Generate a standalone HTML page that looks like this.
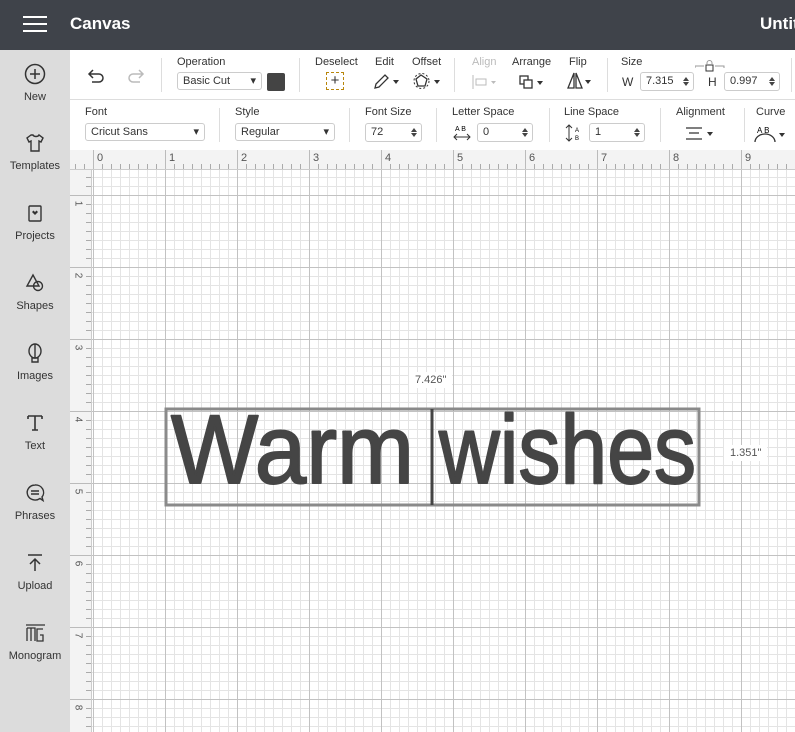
<!DOCTYPE html>
<html><head><meta charset="utf-8"><style>
*{margin:0;padding:0;box-sizing:border-box}
body{width:795px;height:732px;overflow:hidden;position:relative;font-family:"Liberation Sans",sans-serif;color:#333;background:#fff}
.abs{position:absolute}
#hdr{left:0;top:0;width:795px;height:50px;background:#3f434a}
#side{left:0;top:50px;width:70px;height:682px;background:#dcdcdc}
.si{position:absolute;left:0;width:70px;text-align:center;font-size:11px;color:#333}
.si svg{display:block;margin:0 auto 6px}
#tb1{left:70px;top:50px;width:725px;height:50px;background:#fff;border-bottom:1px solid #ddd}
#tb2{left:70px;top:100px;width:725px;height:50px;background:#fff}
.lbl{position:absolute;font-size:11px;color:#333}
.sel{position:absolute;height:18px;border:1px solid #ccc;border-radius:3px;font-size:11px;padding:2px 5px;color:#333;background:#fff}
.sel:after{content:"▾";position:absolute;right:5px;top:1px;font-size:11px}
.spin{position:absolute;height:19px;border:1px solid #ccc;border-radius:3px;font-size:11px;padding:2px 5px;background:#fff}
.spin:after{content:"";position:absolute;right:4px;top:4px;border:3px solid transparent;border-bottom:4px solid #444;border-top:0}
.spin:before{content:"";position:absolute;right:4px;bottom:4px;border:3px solid transparent;border-top:4px solid #444;border-bottom:0}
.vs{position:absolute;width:1px;background:#ddd}
#canvas{left:92px;top:170px;width:703px;height:562px;background-color:#fff;
background-image:linear-gradient(to right,#c2c2c2 1px,transparent 1px),linear-gradient(to bottom,#c2c2c2 1px,transparent 1px),linear-gradient(to right,#e4e4e4 1px,transparent 1px),linear-gradient(to bottom,#e4e4e4 1px,transparent 1px);
background-size:72px 72px,72px 72px,9px 9px,9px 9px;
background-position:1px 25px,1px 25px,1px 7px,1px 7px}
#rh{left:70px;top:150px;width:725px;height:20px;background:#f3f3f3;border-bottom:1px solid #ccc;
background-image:linear-gradient(to right,#bbb 1px,transparent 1px),linear-gradient(to right,#aaa 1px,transparent 1px);
background-size:72px 20px,9px 6px;background-position:23px 0,23px 14px;background-repeat:repeat-x}
#rv{left:70px;top:170px;width:22px;height:562px;background:#f3f3f3;border-right:1px solid #ccc;
background-image:linear-gradient(to bottom,#bbb 1px,transparent 1px),linear-gradient(to bottom,#aaa 1px,transparent 1px);
background-size:22px 72px,6px 9px;background-position:0 25px,16px 7px;background-repeat:repeat-y}
.rn{position:absolute;font-size:11px;color:#555}
.rvn{position:absolute;font-size:10px;color:#555;transform:rotate(90deg)}
</style></head><body>
<div id="hdr" class="abs">
 <div class="abs" style="left:23px;top:16px;width:24px;height:2px;background:#fff;box-shadow:0 7px 0 #fff,0 14px 0 #fff"></div>
 <div class="abs" style="left:70px;top:14px;color:#fff;font-size:17px;font-weight:bold">Canvas</div>
 <div class="abs" style="left:760px;top:14px;color:#fff;font-size:17px;font-weight:bold">Untitled</div>
</div>
<div id="side" class="abs">
 <div class="si" style="top:13px"><svg width="22" height="22" viewBox="0 0 22 22"><circle cx="11" cy="11" r="9.5" fill="none" stroke="#333" stroke-width="1.5"/><path d="M11 6v10M6 11h10" stroke="#333" stroke-width="1.5"/></svg>New</div>
 <div class="si" style="top:82px"><svg width="22" height="22" viewBox="0 0 22 22"><path d="M7 3 3 6l2 4 2-1v10h8V9l2 1 2-4-4-3c-1 2-5 2-6 0z" fill="none" stroke="#333" stroke-width="1.4"/></svg>Templates</div>
 <div class="si" style="top:152px"><svg width="22" height="22" viewBox="0 0 22 22"><rect x="5" y="4" width="12" height="15" rx="1" fill="none" stroke="#333" stroke-width="1.4"/><path d="M11 13l-3-3 1.5-1.5L11 10l1.5-1.5L14 10z" fill="#333"/></svg>Projects</div>
 <div class="si" style="top:222px"><svg width="22" height="22" viewBox="0 0 22 22"><path d="M9 3 3 14h12z" fill="none" stroke="#333" stroke-width="1.4"/><circle cx="14" cy="14" r="4.5" fill="none" stroke="#333" stroke-width="1.4"/></svg>Shapes</div>
 <div class="si" style="top:292px"><svg width="22" height="22" viewBox="0 0 22 22"><ellipse cx="11" cy="9" rx="6" ry="7" fill="none" stroke="#333" stroke-width="1.4"/><path d="M11 2v14M8 16h6v4H8z" fill="none" stroke="#333" stroke-width="1.4"/></svg>Images</div>
 <div class="si" style="top:362px"><svg width="22" height="22" viewBox="0 0 22 22"><path d="M4 4h14M11 4v14M8 18h6M4 4v3M18 4v3" fill="none" stroke="#333" stroke-width="1.6"/></svg>Text</div>
 <div class="si" style="top:432px"><svg width="22" height="22" viewBox="0 0 22 22"><path d="M11 3a8 7.5 0 1 0 5 13.5l3 2-1-3.5A8 7.5 0 0 0 11 3z" fill="none" stroke="#333" stroke-width="1.4"/><path d="M7 9h8M7 12h8" stroke="#333" stroke-width="1.4"/></svg>Phrases</div>
 <div class="si" style="top:502px"><svg width="22" height="22" viewBox="0 0 22 22"><path d="M4 3h14M11 19V7M6 12l5-5 5 5" fill="none" stroke="#333" stroke-width="1.5"/></svg>Upload</div>
 <div class="si" style="top:572px"><svg width="22" height="22" viewBox="0 0 22 22"><path d="M2 3h19M3 6v13M7 6v13M3 6h8v13M19 7h-6v12h6v-6h-3" fill="none" stroke="#333" stroke-width="1.3"/></svg>Monogram</div>
</div>
<div id="tb1" class="abs">
 <svg class="abs" style="left:17px;top:18px" width="20" height="16" viewBox="0 0 20 16"><path d="M6 2 2 6l4 4M2 6h10a4 4 0 0 1 0 8H5" fill="none" stroke="#333" stroke-width="1.5"/></svg>
 <svg class="abs" style="left:55px;top:18px" width="20" height="16" viewBox="0 0 20 16"><path d="M14 2l4 4-4 4M18 6H8a4 4 0 0 0 0 8h7" fill="none" stroke="#bbb" stroke-width="1.5"/></svg>
 <div class="vs" style="left:91px;top:8px;height:34px"></div>
 <div class="lbl" style="left:107px;top:6px">Operation</div>
 <div class="sel" style="left:107px;top:22px;width:85px">Basic Cut</div>
 <div class="abs" style="left:197px;top:23px;width:18px;height:18px;background:#444;border-radius:2px"></div>
 <div class="vs" style="left:229px;top:8px;height:34px"></div>
 <div class="lbl" style="left:245px;top:6px">Deselect</div>
 <div class="abs" style="left:256px;top:22px;width:18px;height:18px;border:1px dashed #b8860b;text-align:center;font-size:15px;line-height:15px">+</div>
 <div class="lbl" style="left:305px;top:6px">Edit</div>
 <svg class="abs" style="left:302px;top:22px" width="28" height="18"><path d="M3 16l1-4L13 3l3 3-9 9z" fill="none" stroke="#333" stroke-width="1.3"/><path d="M21 8h6l-3 4z" fill="#333"/></svg>
 <div class="lbl" style="left:342px;top:6px">Offset</div>
 <svg class="abs" style="left:343px;top:22px" width="28" height="18"><path d="M8 3l6 4-2 7H5L3 7z" fill="none" stroke="#333" stroke-width="1.3"/><circle cx="8.5" cy="9" r="7.5" fill="none" stroke="#333" stroke-dasharray="2 2"/><path d="M21 8h6l-3 4z" fill="#333"/></svg>
 <div class="vs" style="left:384px;top:8px;height:34px"></div>
 <div class="lbl" style="left:402px;top:6px;color:#bbb">Align</div>
 <svg class="abs" style="left:402px;top:24px" width="28" height="16"><path d="M1 1v14M4 5h10v6H4z" fill="none" stroke="#bbb"/><path d="M19 7h5l-2.5 3z" fill="#bbb"/></svg>
 <div class="lbl" style="left:442px;top:6px">Arrange</div>
 <svg class="abs" style="left:449px;top:23px" width="28" height="18"><rect x="1" y="3" width="8" height="8" fill="none" stroke="#333" stroke-width="1.3"/><rect x="5" y="7" width="8" height="8" fill="#fff" stroke="#333" stroke-width="1.3"/><path d="M18 8h6l-3 4z" fill="#333"/></svg>
 <div class="lbl" style="left:499px;top:6px">Flip</div>
 <svg class="abs" style="left:496px;top:22px" width="28" height="18"><path d="M8 1 2 16h6zM10 1l6 15h-6z" fill="none" stroke="#333" stroke-width="1.3"/><path d="M19 8h6l-3 4z" fill="#333"/></svg>
 <div class="vs" style="left:537px;top:8px;height:34px"></div>
 <div class="lbl" style="left:551px;top:6px">Size</div>
 <svg class="abs" style="left:625px;top:10px" width="30" height="14"><rect x="11" y="5" width="7" height="6" fill="none" stroke="#333"/><path d="M12 5V3a2.5 2.5 0 0 1 5 0v2M0 8V6h9M20 6h9v2" fill="none" stroke="#999"/></svg>
 <div class="lbl" style="left:552px;top:25px;font-size:12px">W</div>
 <div class="spin" style="left:570px;top:22px;width:54px">7.315</div>
 <div class="lbl" style="left:638px;top:25px;font-size:12px">H</div>
 <div class="spin" style="left:654px;top:22px;width:56px">0.997</div>
 <div class="vs" style="left:721px;top:8px;height:34px"></div>
</div>
<div id="tb2" class="abs">
 <div class="lbl" style="left:15px;top:6px">Font</div>
 <div class="sel" style="left:15px;top:23px;width:120px">Cricut Sans</div>
 <div class="vs" style="left:149px;top:8px;height:34px"></div>
 <div class="lbl" style="left:165px;top:6px">Style</div>
 <div class="sel" style="left:165px;top:23px;width:100px">Regular</div>
 <div class="vs" style="left:279px;top:8px;height:34px"></div>
 <div class="lbl" style="left:295px;top:6px">Font Size</div>
 <div class="spin" style="left:295px;top:23px;width:57px">72</div>
 <div class="vs" style="left:366px;top:8px;height:34px"></div>
 <div class="lbl" style="left:382px;top:6px">Letter Space</div>
 <svg class="abs" style="left:382px;top:24px" width="20" height="18"><text x="3" y="7" font-size="7" font-family="Liberation Sans">A B</text><path d="M2 13h16M5 10l-3 3 3 3M15 10l3 3-3 3" fill="none" stroke="#333"/></svg>
 <div class="spin" style="left:407px;top:23px;width:56px">0</div>
 <div class="vs" style="left:479px;top:8px;height:34px"></div>
 <div class="lbl" style="left:494px;top:6px">Line Space</div>
 <svg class="abs" style="left:494px;top:23px" width="20" height="20"><path d="M5 2v16M2 5l3-3 3 3M2 15l3 3 3-3" fill="none" stroke="#333"/><text x="11" y="9" font-size="6" font-family="Liberation Sans">A</text><text x="11" y="17" font-size="6" font-family="Liberation Sans">B</text></svg>
 <div class="spin" style="left:519px;top:23px;width:56px">1</div>
 <div class="vs" style="left:590px;top:8px;height:34px"></div>
 <div class="lbl" style="left:606px;top:6px">Alignment</div>
 <svg class="abs" style="left:615px;top:26px" width="32" height="16"><path d="M1 2h16M4 7h10M1 13h16" stroke="#333" stroke-width="1.3"/><path d="M22 6h6l-3 4z" fill="#333"/></svg>
 <div class="vs" style="left:674px;top:8px;height:34px"></div>
 <div class="lbl" style="left:686px;top:6px">Curve</div>
 <svg class="abs" style="left:684px;top:24px" width="34" height="20"><text x="3" y="9" font-size="8" font-family="Liberation Sans">A B</text><path d="M1 18a10 8 0 0 1 20 0" fill="none" stroke="#333" stroke-width="1.3"/><path d="M25 9h6l-3 4z" fill="#333"/></svg>
</div>
<div id="rh" class="abs">
 <span class="rn" style="left:27px;top:2px">0</span><span class="rn" style="left:99px;top:2px">1</span><span class="rn" style="left:171px;top:2px">2</span><span class="rn" style="left:243px;top:2px">3</span><span class="rn" style="left:315px;top:2px">4</span><span class="rn" style="left:387px;top:2px">5</span><span class="rn" style="left:459px;top:2px">6</span><span class="rn" style="left:531px;top:2px">7</span><span class="rn" style="left:603px;top:2px">8</span><span class="rn" style="left:675px;top:2px">9</span>
</div>
<div id="rv" class="abs">
 <span class="rvn" style="left:5px;top:28px">1</span><span class="rvn" style="left:5px;top:100px">2</span><span class="rvn" style="left:5px;top:172px">3</span><span class="rvn" style="left:5px;top:244px">4</span><span class="rvn" style="left:5px;top:316px">5</span><span class="rvn" style="left:5px;top:388px">6</span><span class="rvn" style="left:5px;top:460px">7</span><span class="rvn" style="left:5px;top:532px">8</span>
</div>
<div id="canvas" class="abs"></div>
<div class="abs" style="left:409px;top:372px;background:#fff;font-size:11px;color:#555;padding:2px 6px">7.426"</div>
<div class="abs" style="left:724px;top:445px;background:#fff;font-size:11px;color:#555;padding:2px 6px">1.351"</div>
<svg class="abs" style="left:0;top:0" width="795" height="732">
 <rect x="166" y="409" width="533" height="96" fill="none" stroke="#8a8a8a" stroke-width="3"/>
 <line x1="432" y1="409" x2="432" y2="505" stroke="#444" stroke-width="3"/>
 <text x="171" y="483" font-family="Liberation Sans" font-size="97" fill="#454545" stroke="#454545" stroke-width="2" stroke-linejoin="round" textLength="243" lengthAdjust="spacingAndGlyphs">Warm</text>
 <text x="439" y="483" font-family="Liberation Sans" font-size="97" fill="#454545" stroke="#454545" stroke-width="2" stroke-linejoin="round" textLength="257" lengthAdjust="spacingAndGlyphs">wishes</text>
</svg>
</body></html>
